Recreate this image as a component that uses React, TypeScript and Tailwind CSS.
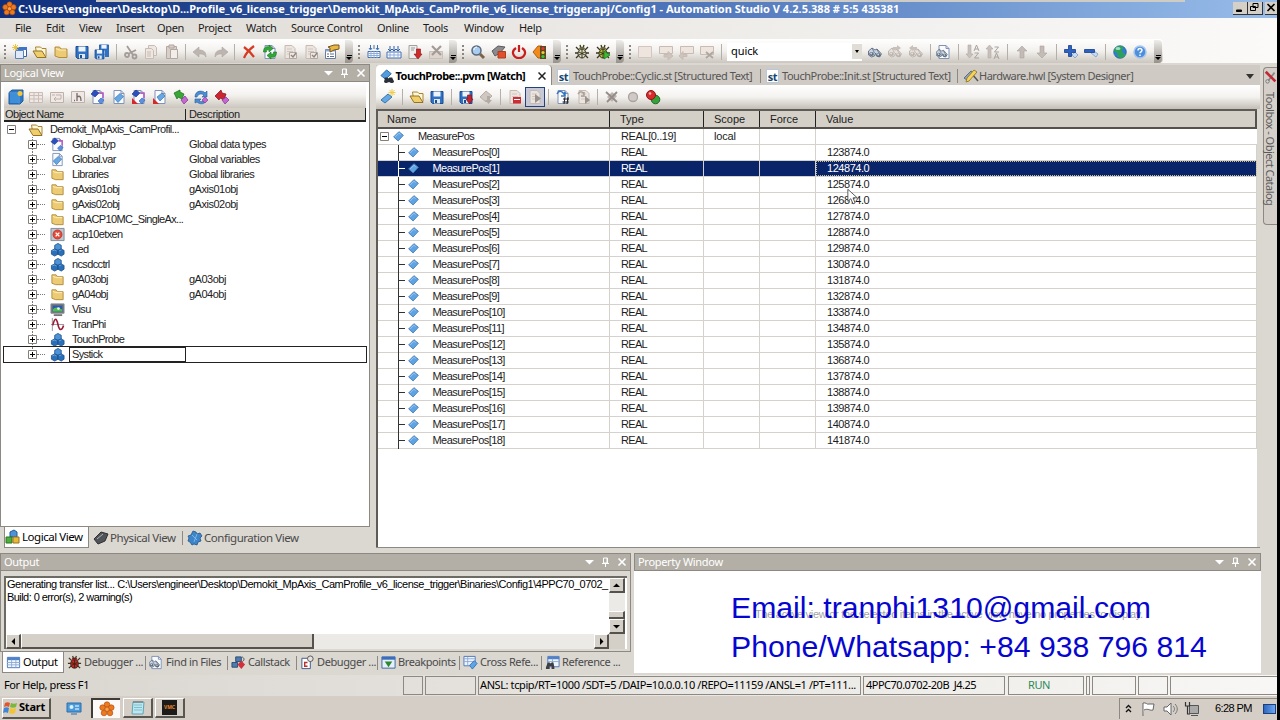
import React from 'react';
import clsx from 'clsx';

const page = (
  <>
    <path d="M3 1.5h7l3 3v10H3z" fill="#fbfbff" stroke="#7f93b5" />
    <path d="M10 1.5v3h3" fill="none" stroke="#7f93b5" />
  </>
);

const greyPage = (
  <>
    <path d="M3 1.5h7l3 3v10H3z" fill="#ece5df" stroke="#c6bab3" />
    <path d="M5 5h5M5 7.500h6M5 10h4" stroke="#cfc5bf" />
  </>
);

const tag = (
  <>
    <path d="M2 8.500 8.500 2 14 6.500 7.500 13.500z" fill="#5fa3e2" stroke="#3f79b4" />
    <path d="M4 8.500 8.500 4l2 1.500" fill="none" stroke="#a9d2f6" />
  </>
);

const floppy = (
  <>
    <path d="M2 2.500h12v12H3.500L2 13z" fill="#2f72c4" stroke="#1b4d92" />
    <path d="M4.500 2.500h7v5h-7z" fill="#eef4fb" />
    <path d="M5 10h6v4.500H5z" fill="#dfe8f2" />
    <path d="M6 11h2v3H6z" fill="#1b4d92" />
  </>
);

const binoculars = (dark: string, light: string) => (
  <>
    <path d="M1.500 7 5 4l3 2 2-1 4.500 5-2 3-3-1-1-3-1 3-3 1-3-2z" fill={light} stroke={dark} strokeWidth=".9" />
    <path d="M5 4l2.500 5M9.500 5 12 9" stroke={dark} strokeWidth=".8" />
    <ellipse cx="4.500" cy="10" rx="2.300" ry="2" fill={dark} />
    <ellipse cx="11.500" cy="11" rx="2.300" ry="2" fill={dark} />
    <circle cx="4.200" cy="9.600" r="1" fill={light} />
    <circle cx="11.200" cy="10.600" r="1" fill={light} />
  </>
);

const bug = (body: string, back: string) => (
  <>
    <path d="M2 3l3 3M14 3l-3 3M1 9h4M15 9h-4M2 14l3-3M14 14l-3-3M6 1l1 3M10 1 9 4" stroke="#3a3520" strokeWidth="1.300" />
    <ellipse cx="8" cy="9.500" rx="4" ry="4.500" fill={body} stroke="#2e2a18" />
    <path d="M5 5c0-3 6-3 6 0z" fill={back} />
    <path d="M8 5v9M5 8l6 3M11 8l-6 3" stroke="#2e2a18" strokeWidth=".9" />
  </>
);

const icons: Record<string, React.ReactNode> = {
  flower: (
    <g fill="#ee7a1e" stroke="#a8430c" strokeWidth=".6">
      <circle cx="8" cy="3.600" r="2.800" />
      <circle cx="12.300" cy="6.600" r="2.800" />
      <circle cx="11" cy="12" r="2.800" />
      <circle cx="5" cy="12" r="2.800" />
      <circle cx="3.600" cy="6.600" r="2.800" />
      <circle cx="8" cy="8.300" r="2.200" fill="#f9a24a" />
    </g>
  ),
  newWindow: (
    <>
      <path d="M5 3.500h9.500v9H5z" fill="#fff" stroke="#335fa8" />
      <path d="M5 3h10v3H5z" fill="#3d74c8" />
      <path d="M3.500 6.500h8v8h-8z" fill="#dfe9f8" stroke="#5c80b8" />
      <path d="M3.500 0v7M0 3.500h7M1 1l5 5M6 1 1 6" stroke="#e8c038" strokeWidth=".9" />
    </>
  ),
  openFolder: (
    <>
      <path d="M3.500 3h5l1.500 1.500h4v8h-9z" fill="#fff7d8" stroke="#a88430" />
      <path d="M1 7h9l4 6.500H5z" fill="#f0cf6a" stroke="#93712a" />
    </>
  ),
  folder: (
    <>
      <path d="M2 3h4.500l1.500 2h6v8.500H6L2 12z" fill="#edcb74" stroke="#a98432" strokeWidth=".9" />
      <path d="M3 4.500 6 6h7" fill="none" stroke="#fff0b8" />
    </>
  ),
  save: floppy,
  saveAll: (
    <>
      <g transform="translate(4 -1) scale(.75)">{floppy}</g>
      <g transform="translate(-.5 4) scale(.75)">{floppy}</g>
      <path d="M11 5h4v8h-4z" fill="#2f72c4" />
    </>
  ),
  cut: (
    <g fill="none" stroke="#a49c98" strokeWidth="1.800">
      <path d="M4 2l6 9M13 6 5 10" />
      <circle cx="4" cy="11" r="2" />
      <circle cx="11.500" cy="12.500" r="2" />
    </g>
  ),
  copy: (
    <g fill="#eee6e1" stroke="#c8bbb4">
      <path d="M5.500 1.500h6l2 2v8h-8z" />
      <path d="M2.500 4.500h6l2 2v8h-8z" />
      <path d="M4 8h4M4 10h4M4 12h4" />
    </g>
  ),
  paste: (
    <g fill="#d9cfc9" stroke="#b3a7a1">
      <path d="M2.500 2.500h10v12h-10z" />
      <path d="M5 1h5v3H5z" />
      <path d="M6.500 5.500h7v9h-7z" fill="#f3edea" />
    </g>
  ),
  undo: <path d="M1 8l6-5v3c5 0 7 2 7 7-2-3-4-3-7-3v3z" fill="#bdb5b0" stroke="#aca49f" strokeWidth=".6" />,
  redo: <path d="M15 8 9 3v3C4 6 2 8 2 13c2-3 4-3 7-3v3z" fill="#bdb5b0" stroke="#aca49f" strokeWidth=".6" />,
  cross: <path d="M3 3c4 3 7 6 10 10M13 2C9 5 5 9 3 14" fill="none" stroke="#d63a22" strokeWidth="2.200" />,
  refreshPage: (
    <>
      {page}
      <path d="M1.500 8c0-5 3-6 5.500-5V1l4 3.500L7 8V6C5 5.500 4 6.500 4.500 8zM14.500 8c0 5-3 6-5.500 5v2l-4-3.500L9 8v2c2 .500 3-.500 2.500-2z" fill="#2fa83a" stroke="#17701f" strokeWidth=".6" />
    </>
  ),
  pageCheck: (
    <>
      {greyPage}
      <path d="M7.500 8.500h7v6h-7z" fill="#eee7e2" stroke="#b5a8a2" />
      <path d="M9 11l2 2 3-4" fill="none" stroke="#8f857f" strokeWidth="1.400" />
    </>
  ),
  properties: (
    <>
      <path d="M1.500 5.500h10v9h-10z" fill="#fff" stroke="#6d7c96" />
      <path d="M1.500 5.500h10v2h-10z" fill="#88a8d8" />
      <path d="M3 10h2M6 10h4M3 12.500h2M6 12.500h4" stroke="#5570a8" />
      <path d="M4 3l6-2h5v4l-5 1-4 2V4z" fill="#e8b744" stroke="#76561c" />
    </>
  ),
  build: (
    <>
      <path d="M2 7.500h12v6H2z" fill="#fff" stroke="#3e6fb4" />
      <path d="M2 9.500h12M2 11.500h12M5 7v7M8 7v7M11 7v7" stroke="#8fadd8" />
      <path d="M4.500 1v4M8 1v4M11.500 1v4M3 4l1.500 2L6 4M10 4l1.500 2L13 4" fill="none" stroke="#3f70b6" />
    </>
  ),
  rebuild: (
    <>
      <path d="M1 8h14v6H1z" fill="#fff" stroke="#3e6fb4" />
      <path d="M1 11h14M4 8v6M8 8v6M12 8v6" stroke="#8fadd8" />
      <path d="M4 2v5M8 2v5M12 2v5M2 5l2 2 2-2M6 5l2 2 2-2M10 5l2 2 2-2" fill="none" stroke="#2a5faa" />
    </>
  ),
  transfer: (
    <>
      <path d="M2 1.500h8v13H2z" fill="#eee" stroke="#a5a09c" />
      <path d="M4 4h4M4 6h3" stroke="#999" />
      <path d="M9.500 5h4v5H15l-4 5-4-5h2.500z" fill="#d02a2a" stroke="#8b1212" strokeWidth=".6" />
    </>
  ),
  disabledCross: (
    <>
      <path d="M1.500 7.500h13v7h-13z" fill="#ded5cf" stroke="#cabfb9" />
      <path d="M4 2l9 9M13 2 4 11" stroke="#a49b96" strokeWidth="2.200" />
    </>
  ),
  magnifier: (
    <>
      <path d="M10 10l4 4" stroke="#7b6248" strokeWidth="3" />
      <circle cx="6.500" cy="6.500" r="4.500" fill="#a9cdf0" stroke="#59677c" strokeWidth="1.500" />
      <path d="M4 6c0-2 1-3 3-3" fill="none" stroke="#fff" />
    </>
  ),
  stopTarget: (
    <>
      <path d="M1 7 7 2l7 1-5 6-5 3z" fill="#8b8b8e" stroke="#5b5b5e" />
      <path d="M7 7.500h7.500v6.500H7z" fill="#e0502c" stroke="#b03a1c" />
    </>
  ),
  power: <path d="M5 4C-1 8 3 14 8 14s9-6 3-10M8 1v7" fill="none" stroke="#c81e1e" strokeWidth="2.200" />,
  traffic: (
    <>
      <path d="M1 8 6 2h4v12H6z" fill="#f08a1c" stroke="#b85a08" />
      <path d="M8 2h6v13H8z" fill="#5a4a22" />
      <circle cx="11" cy="4.500" r="1.600" fill="#e33" />
      <circle cx="11" cy="8.500" r="1.600" fill="#ec3" />
      <circle cx="11" cy="12.500" r="1.600" fill="#3c3" />
    </>
  ),
  bug: bug('#d8d6bc', '#6b6a3a'),
  bugRun: (
    <>
      {bug('#b4b83a', '#6b6a3a')}
      <path d="M9 7l6 4-6 4z" fill="#42b838" stroke="#1c7a1c" strokeWidth=".8" />
    </>
  ),
  redBug: bug('#cc2222', '#7c1616'),
  bookmark: <path d="M1.500 2.500h13v11h-13z" fill="#eee5df" stroke="#d3c6bf" />,
  bookmarkNext: (
    <g fill="#eee5df" stroke="#c8bbb4">
      <path d="M1.500 2.500h13v7h-13z" />
      <path d="M6 10.500h4v-3l5 4.500-5 4v-3H6z" fill="#cfc4bd" />
    </g>
  ),
  bookmarkPrev: (
    <g fill="#eee5df" stroke="#c8bbb4">
      <path d="M2.500 2.500h13v7h-13z" />
      <path d="M9 10.500H5v-3L1 12l4 3.500v-3h4z" fill="#cfc4bd" />
    </g>
  ),
  bookmarkClear: (
    <g fill="#eee5df" stroke="#c8bbb4">
      <path d="M1.500 2.500h13v8h-13z" />
      <path d="M7 8l7 6M14 8l-7 6" stroke="#b0a6a0" strokeWidth="1.800" />
    </g>
  ),
  find: binoculars('#5c6c80', '#c9d4e0'),
  findGrey: (
    <>
      {binoculars('#b9b0ab', '#e6dfda')}
      <path d="M6 3h4V1l4 3-4 3V5H6z" fill="#c9c0ba" />
    </>
  ),
  findGreyBack: (
    <>
      {binoculars('#b9b0ab', '#e6dfda')}
      <path d="M9 3H5V1L1 4l4 3V5h4z" fill="#c9c0ba" />
    </>
  ),
  findPage: (
    <>
      {page}
      <g transform="translate(-1 2) scale(.85)">{binoculars('#5c6c80', '#c9d4e0')}</g>
    </>
  ),
  sortAsc: (
    <>
      <path d="M3 1h3v9h2l-3.500 4L1 10h2z" fill="#c8c0bb" stroke="#b2aaa5" strokeWidth=".6" />
      <path d="M9 7l2.500-6L14 7M10 5h3M9.500 9h4l-4 5h4.500" fill="none" stroke="#aaa29e" />
    </>
  ),
  sortDesc: (
    <>
      <path d="M3 14h3V5h2L4.500 1 1 5h2z" fill="#c8c0bb" stroke="#b2aaa5" strokeWidth=".6" />
      <path d="M9.500 3h4l-4 5h4.500M9 15l2.500-6L14 15M10 13h3" fill="none" stroke="#aaa29e" />
    </>
  ),
  up: <path d="M6 14h4V7h3L8 2 3 7h3z" fill="#c3bbb6" stroke="#aba39e" strokeWidth=".6" />,
  down: <path d="M6 2h4v7h3l-5 5-5-5h3z" fill="#c3bbb6" stroke="#aba39e" strokeWidth=".6" />,
  plus: (
    <>
      <path d="M9 11l3-3 3 3-3 3z" fill="#c9daf2" stroke="#8fa9cf" />
      <path d="M5.500 1.500h3v4h4v3h-4v4h-3v-4h-4v-3h4z" fill="#2b62c4" stroke="#173f88" strokeWidth=".8" />
    </>
  ),
  minus: (
    <>
      <path d="M8 9l3-2 4 3-2 3z" fill="#c9daf2" stroke="#8fa9cf" />
      <path d="M1.500 5.500h10v3h-10z" fill="#2b62c4" stroke="#173f88" strokeWidth=".8" />
    </>
  ),
  globe: (
    <>
      <circle cx="8" cy="8" r="6.300" fill="#2f7fd0" stroke="#1d5a8c" strokeWidth=".7" />
      <path d="M2 7c1-5 7-6 9-4 1 2-2 3-1 5s4 1 3 4c-3 3-6 2-8 0 2-2 0-3-3-5z" fill="#2fa05a" />
      <ellipse cx="6" cy="4.500" rx="2.500" ry="1.500" fill="#9fe0c0" />
    </>
  ),
  help: (
    <>
      <circle cx="8" cy="8" r="6" fill="#4d8fdc" stroke="#a9c6ec" strokeWidth="1.500" />
      <path d="M6 6.500C6 4 10 4 10 6.300c0 1.500-2 1.500-2 3M8 10.500v1.500" fill="none" stroke="#fff" strokeWidth="1.500" />
    </>
  ),
  cube: (
    <>
      <path d="M1 3.500 4 1h11v11l-3 3H1z" fill="#2c78c4" stroke="#1e5da2" />
      <path d="M1.500 4H11v10.500" fill="none" stroke="#63a6e4" />
      <path d="M2 5h8v9H2z" fill="#3f8fd8" />
      <circle cx="12" cy="4.500" r="2.500" fill="#f6c53c" />
    </>
  ),
  gridGrey: (
    <g fill="#f0e8e4" stroke="#cabdb7">
      <path d="M1.500 3.500h13v10h-13z" />
      <path d="M1 6.500h14M1 10h14M6 3v10M10.500 3v10" />
    </g>
  ),
  textGrey: (
    <g fill="#f0e8e4" stroke="#beb1ab">
      <path d="M1.500 3.500h13v10h-13z" />
      <path d="M7 6h5v4H5M7 8l-2 2 2 2M3 6h3" fill="none" />
    </g>
  ),
  headerGrey: (
    <>
      <path d="M1.500 2.500h13v11h-13z" fill="#f0e8e4" stroke="#beb1ab" />
      <path d="M4 11.500h1M7 4v8M7 8c3-2 4 0 4 4" fill="none" stroke="#746b68" strokeWidth="1.300" />
    </>
  ),
  typePage: (
    <>
      {page}
      <path d="M1 5l4-4 4 3-4 4z" fill="#2c4fc0" stroke="#182f86" strokeWidth=".6" />
      <path d="M9 4h4v5" fill="none" stroke="#b85ac4" strokeWidth="1.500" />
      <path d="M8 12l3-3 3 2-3 4z" fill="#5d90e0" stroke="#2d5fb0" strokeWidth=".6" />
    </>
  ),
  varPage: (
    <>
      {page}
      <path d="M3.500 9.500 9 4.500l3.500 3-5.500 6z" fill="#66a8e4" stroke="#3c74ae" strokeWidth=".7" />
    </>
  ),
  typePageRed: (
    <>
      {page}
      <path d="M1 5l4-4 4 3-4 4z" fill="#2c4fc0" stroke="#182f86" strokeWidth=".6" />
      <path d="M9 4h4v5" fill="none" stroke="#b85ac4" strokeWidth="1.500" />
      <path d="M1 9l6 6H1z" fill="#d62828" />
      <path d="M8 12l3-3 3 2-3 4z" fill="#5d90e0" stroke="#2d5fb0" strokeWidth=".6" />
    </>
  ),
  varPageRed: (
    <>
      {page}
      <path d="M5 8l5-4 3 3-5 5z" fill="#66a8e4" stroke="#3c74ae" strokeWidth=".7" />
      <path d="M1 9l6 6H1z" fill="#d62828" />
    </>
  ),
  greenArrow: (
    <>
      <path d="M1 4l6-3v2l4 2-2 5-4-2-1 2z" fill="#39a636" stroke="#1a6a1a" strokeWidth=".7" />
      <path d="M8 11l4-4 3 4-4 4z" fill="#c268cf" stroke="#7e3190" strokeWidth=".7" />
    </>
  ),
  sync: (
    <>
      <path d="M2 8c0-7 8-7 10-4l2-2v6H9l2-2C8 4 5 5 4 8zM2 10h6l-2 2c2 1 4 1 5-1l2 1c-2 4-7 3-9 1l-2 1z" fill="#4a8ed8" stroke="#245a9a" strokeWidth=".6" />
      <path d="M9 11l3-3 3 3-3 3z" fill="#c268cf" stroke="#7e3190" strokeWidth=".6" />
    </>
  ),
  redArrow: (
    <>
      <path d="M1 7l6-6 1 3 4 1-2 6-4-2-1 2z" fill="#cc2430" stroke="#7c0e18" strokeWidth=".7" />
      <path d="M8 11l4-3 3 3-4 4z" fill="#c268cf" stroke="#7e3190" strokeWidth=".7" />
    </>
  ),
  tag,
  tagWand: (
    <>
      <path d="M1 11 8 5l4 3-7 6z" fill="#66a8e4" stroke="#3c74ae" />
      <path d="M12 0v7M8.500 3.500h7M9.500 1l5 5M14.500 1l-5 5" stroke="#f0cb48" />
    </>
  ),
  tagWatch: (
    <>
      <path d="M1 7l6-6 5 4-6 6z" fill="#4f9ce0" stroke="#2d659e" />
      <path d="M5 9h3l1 1 1-1h3l2 5H5z" fill="#2b3038" />
      <circle cx="6.500" cy="13" r="2" fill="#2b3038" />
      <circle cx="12.500" cy="13" r="2" fill="#2b3038" />
    </>
  ),
  saveDown: (
    <>
      {floppy}
      <path d="M9.500 6h4v4H15l-3.500 5L8 10h1.500z" fill="#c3232c" stroke="#821018" strokeWidth=".6" />
    </>
  ),
  greyTag: (
    <>
      <path d="M2 8l6-6 6 5-6 6z" fill="#cfc7c2" stroke="#b5ada8" />
      <path d="M9 7h3v4h2l-3.500 4L7 11h2z" fill="#b2aaa5" />
    </>
  ),
  stopPage: (
    <>
      {greyPage}
      <path d="M6 8h8v6.500H6z" fill="#cf2d36" />
      <path d="M7 10.500h6" stroke="#fff" />
    </>
  ),
  playPage: (
    <>
      {greyPage}
      <path d="M8 5l6 4.500L8 14z" fill="#98908c" />
    </>
  ),
  hashPage: (
    <>
      {page}
      <path d="M2 5c2-4 5-3 7 0l1-2v4H6" fill="none" stroke="#3474c0" strokeWidth="1.500" />
      <path d="M10 8l-1 7M13 8l-1 7M8 10h6M7.500 13h6" stroke="#111" strokeWidth=".9" />
    </>
  ),
  refreshGrey: (
    <>
      {greyPage}
      <path d="M2 5c2-3 4-3 6 0v-2v4H5" fill="none" stroke="#aaa09a" strokeWidth="1.500" />
      <path d="M9 7l5 4-5 4z" fill="#98908c" />
    </>
  ),
  crossGrey: (
    <>
      <path d="M3 8l5-5 5 4-5 6z" fill="#bdb4af" />
      <path d="M2 3l11 10M13 3 3 13" stroke="#958c88" strokeWidth="1.800" />
    </>
  ),
  circleGrey: <circle cx="8" cy="8" r="4.500" fill="#d0c9c5" stroke="#aaa29e" strokeWidth="1.300" />,
  balls: (
    <>
      <circle cx="10.500" cy="10.500" r="4.300" fill="#36a23c" stroke="#1b6a22" />
      <circle cx="6" cy="6" r="4.500" fill="#d62c2c" stroke="#8c1616" />
      <circle cx="5" cy="4.500" r="1.300" fill="#f8b0b0" />
    </>
  ),
  designer: (
    <>
      <path d="M1 10 8 3l3 2-7 7z" fill="#8fa6be" stroke="#5b6e84" />
      <path d="M9 6l6 7" stroke="#555" strokeWidth="1.500" />
      <path d="M3 14l1-4 7-8 3 2-8 9z" fill="#f5d25a" stroke="#8d6f1c" strokeWidth=".8" />
    </>
  ),
  errorBox: (
    <>
      <path d="M1 1.500h14v13H1z" fill="#bfc7cf" stroke="#7f8a94" />
      <circle cx="8" cy="8" r="4.800" fill="#e2493a" stroke="#c0392c" />
      <path d="M6 6l4 4M10 6l-4 4" stroke="#fff" strokeWidth="1.500" />
    </>
  ),
  cubes: (
    <g fill="#2a70b8" stroke="#154a86" strokeWidth=".8">
      <path d="M5 3.500 8.500 1.500 12 3.500v4L8.500 9 5 7.500z" fill="#4b92d6" />
      <path d="M1.500 9 5 7.500 8.500 9v4L5 15l-3.500-2z" />
      <path d="M8.500 9 12 7.500 15 9v4l-3 2-3.500-2z" />
      <path d="M2.500 9.500 5 8.500l2 1M9.500 9.500 12 8.500" stroke="#7db7ee" fill="none" />
    </g>
  ),
  colorCubes: (
    <>
      <path d="M5 3l4-2 3 2v5H5z" fill="#4b92d6" stroke="#245a96" />
      <path d="M1 8h6v6H1z" fill="#4fae3e" stroke="#2a7420" />
      <path d="M8 8h6v6H8z" fill="#e8b836" stroke="#9a7418" />
    </>
  ),
  visu: (
    <>
      <path d="M1 2h14v10H1z" fill="#6a727c" stroke="#8a8f95" />
      <path d="M3 4h10v6H3z" fill="#2a56b8" />
      <path d="M3 10V8c2-3 5-3 10 0v2z" fill="#4ec04a" />
      <circle cx="9" cy="7" r="1.500" fill="#e8f0e8" />
      <path d="M4 14h9" stroke="#777" strokeWidth="2" />
    </>
  ),
  wave: (
    <>
      <path d="M2.500 1v14M1 8h14" stroke="#888" strokeWidth=".9" />
      <path d="M3 9C5 0 7 1 8.500 8s4 7 6 1" fill="none" stroke="#9c1838" strokeWidth="1.700" />
    </>
  ),
  plc: (
    <>
      <path d="M1 9l7-7 7 2-3 7-7 3z" fill="#505358" stroke="#2e3034" />
      <path d="M4 9l6-5" stroke="#b0b4ba" />
    </>
  ),
  gear: (
    <>
      <path d="M6 1l3 1 1 2 3-1 2 3-2 2 1 3-3 1-1 3-3-1-2 1-2-3-2-1 1-3-1-2 3-1z" fill="#3d84c8" stroke="#1f558e" strokeWidth=".8" />
      <path d="M5 5l5 5M10 4 7 12" stroke="#8cc0f0" strokeWidth=".8" />
    </>
  ),
  table: (
    <>
      <path d="M1.500 2.500h13v11h-13z" fill="#f4f8ff" stroke="#4f78b4" />
      <path d="M1.500 2.500h13v3h-13z" fill="#4f82cc" />
      <path d="M1 8h14M1 10.500h14M6 5v8M10.500 5v8" stroke="#8fabd4" />
    </>
  ),
  callstack: (
    <>
      <path d="M1 8h6v5H1zM5 2h6v5H5z" fill="#4d7cae" stroke="#2c4b70" />
      <path d="M12 2c3 2 2 4 0 5" fill="none" stroke="#445" />
      <path d="M7 10l4-4 4 4-4 5z" fill="#d2303a" />
    </>
  ),
  debugWatch: (
    <>
      <path d="M2 3.500h9v11H2z" fill="#fff" stroke="#3c568a" />
      <circle cx="11" cy="4" r="3" fill="#e7dfe0" stroke="#555" />
      <path d="M8 8H5v4h3" fill="none" stroke="#b83030" strokeWidth="1.500" />
    </>
  ),
  breakpoints: (
    <>
      <path d="M1 2h14v12H1z" fill="#e7effb" stroke="#3a64a4" />
      <path d="M1 2h14v3H1z" fill="#3a6cc0" />
      <path d="M4 7h8l-4 6z" fill="#2c8a2c" />
    </>
  ),
  crossRef: (
    <>
      <path d="M1 1.500h12v10H1z" fill="#eef4ff" stroke="#4f78b4" />
      <path d="M1 4h12M1 7h12M5 2v9" stroke="#8fabd4" />
      <path d="M7 11l5-5 3 3-5 6z" fill="#5fa4e6" stroke="#3674b4" />
    </>
  ),
  refList: (
    <>
      <path d="M3 1.500h12v11H3z" fill="#eef4ff" stroke="#4f78b4" />
      <path d="M3 2h12v2.500H3z" fill="#4f82cc" />
      <path d="M3 7h12M8 4v8" stroke="#8fabd4" />
      <path d="M1 13l2-5h2l1 1 1-1h2l1 5v2H7v-3H5v3H1z" fill="#3c4046" />
    </>
  ),
  windows: (
    <>
      <path d="M2 3c2-1 3-1 5 0L6 7C4 6 3 6 1 7z" fill="#e2552c" />
      <path d="M8 3c2 1 4 1 6 0l-1 4c-2 1-4 1-6 0z" fill="#7bb83a" />
      <path d="M1 8c2-1 3-1 5 0l-1 5c-2-1-3-1-5 0z" fill="#3f86d8" />
      <path d="M7 8c2 1 4 1 6 0l-1 5c-2 1-4 1-6 0z" fill="#f4c430" />
    </>
  ),
  explorer: (
    <>
      <path d="M1 3h14v9H1z" fill="#4a9ada" stroke="#2c6fae" />
      <circle cx="5.500" cy="7" r="2" fill="#d8f0ff" />
      <path d="M9 6h4M9 9h4" stroke="#fff" />
      <path d="M5 14h6" stroke="#7f9db8" strokeWidth="2" />
    </>
  ),
  notepad: (
    <>
      <path d="M3 2h11l-1 12H2z" fill="#bfe6ee" stroke="#5fa4b6" />
      <path d="M4 5h8M4 7.500h8M4 10h8" stroke="#7cc0cf" />
      <path d="M4 1v2M6 1v2M8 1v2M10 1v2M12 1v2" stroke="#666" />
    </>
  ),
  flag: <path d="M3 15V2c3-1 4 2 6 1l5 0-1 6c-3 1-5-2-9 0" fill="#fff" stroke="#666" />,
  speaker: (
    <>
      <path d="M2 6h3l4-4v12l-4-4H2z" fill="#fff" stroke="#666" />
      <path d="M11 5c2 2 2 4 0 6M13 3c3 3 3 7 0 10" fill="none" stroke="#777" />
    </>
  ),
  network: (
    <>
      <path d="M5.500 4.500h9v8h-9z" fill="#aaa" stroke="#555" />
      <path d="M7 14.500h7" stroke="#555" />
      <path d="M1.500 1v4h4V1M3.500 5v8H6" fill="none" stroke="#333" strokeWidth="1.200" />
    </>
  ),
  tools: (
    <>
      <path d="M12 3 5 12" stroke="#888" strokeWidth="2" />
      <path d="M2 2l11 11" stroke="#c22835" strokeWidth="3" />
      <circle cx="4" cy="13" r="2" fill="none" stroke="#777" />
    </>
  ),
};

function Icon({ name, size = 16 }: { name: string; size?: number }) {
  return (
    <svg width={size} height={size} viewBox="0 0 16 16" className="shrink-0">
      {icons[name]}
    </svg>
  );
}

function Separator() {
  return (
    <div className="flex w-[7.800px] shrink-0 justify-center">
      <div className="h-4 w-px bg-[#b4b0a9]" />
    </div>
  );
}

function Grip() {
  return (
    <div className="flex w-[9.500px] shrink-0 flex-col items-center gap-[2px]">
      {[0, 1, 2, 3].map((i) => (
        <div key={i} className="h-[2px] w-[2px] bg-[#8b8780]" />
      ))}
    </div>
  );
}

function Overflow() {
  return (
    <div className="mr-px ml-[3.300px] flex h-[23px] w-2 shrink-0 flex-col items-center justify-end rounded-r bg-gradient-to-b from-[#efedea] to-[#96928b] pb-[3px]">
      <div className="mb-px h-px w-[5px] bg-black" />
      <div className="h-0 w-0 border-x-[3px] border-t-[3px] border-x-transparent border-t-black" />
    </div>
  );
}

// "|" separator, ":" grip, ">" overflow button, anything else an icon
function ToolItems({ items }: { items: string[] }) {
  return (
    <>
      {items.map((item, i) => {
        if (item === '|') return <Separator key={i} />;
        if (item === ':') return <Grip key={i} />;
        if (item === '>') return <Overflow key={i} />;
        return (
          <div key={i} className="flex w-[20.600px] shrink-0 justify-center">
            <Icon name={item} />
          </div>
        );
      })}
    </>
  );
}

const menu = [
  ['File', 'w-[31px]'],
  ['Edit', 'w-[33px]'],
  ['View', 'w-[37px]'],
  ['Insert', 'w-[41px]'],
  ['Open', 'w-[41px]'],
  ['Project', 'w-[48px]'],
  ['Watch', 'w-[45px]'],
  ['Source Control', 'w-[86px]'],
  ['Online', 'w-[46px]'],
  ['Tools', 'w-[41px]'],
  ['Window', 'w-[55px]'],
  ['Help', 'w-[40px]'],
];

const toolbarLeft = [
  'newWindow', 'openFolder', 'folder', 'save', 'saveAll', '|', 'cut', 'copy', 'paste', '|', 'undo', 'redo', '|',
  'cross', 'refreshPage', 'pageCheck', 'pageCheck', 'properties', '>', ':', 'build', 'rebuild', 'transfer',
  'disabledCross', '>', ':', 'magnifier', 'stopTarget', 'power', 'traffic', '>', ':', 'bug', 'bugRun', '>', ':',
  'bookmark', 'bookmarkNext', 'bookmarkPrev', 'bookmarkClear', '|',
];

const toolbarRight = [
  'find', 'findGrey', 'findGreyBack', '|', 'findPage', '|', 'sortAsc', 'sortDesc', '|', 'up', 'down', '|',
  'plus', 'minus', '|', 'globe', 'help', '>',
];

const tree = [
  { icon: 'typePage', name: 'Global.typ', desc: 'Global data types' },
  { icon: 'varPage', name: 'Global.var', desc: 'Global variables' },
  { icon: 'folder', name: 'Libraries', desc: 'Global libraries' },
  { icon: 'folder', name: 'gAxis01obj', desc: 'gAxis01obj' },
  { icon: 'folder', name: 'gAxis02obj', desc: 'gAxis02obj' },
  { icon: 'folder', name: 'LibACP10MC_SingleAx...', desc: '' },
  { icon: 'errorBox', name: 'acp10etxen', desc: '' },
  { icon: 'cubes', name: 'Led', desc: '' },
  { icon: 'cubes', name: 'ncsdcctrl', desc: '' },
  { icon: 'folder', name: 'gA03obj', desc: 'gA03obj' },
  { icon: 'folder', name: 'gA04obj', desc: 'gA04obj' },
  { icon: 'visu', name: 'Visu', desc: '' },
  { icon: 'wave', name: 'TranPhi', desc: '' },
  { icon: 'cubes', name: 'TouchProbe', desc: '' },
  { icon: 'cubes', name: 'Systick', desc: '' },
];

const outputTabs = [
  { icon: 'redBug', label: 'Debugger ...', width: 'w-[82px]' },
  { icon: 'findPage', label: 'Find in Files', width: 'w-[82px]' },
  { icon: 'callstack', label: 'Callstack', width: 'w-[69px]' },
  { icon: 'debugWatch', label: 'Debugger ...', width: 'w-[81px]' },
  { icon: 'breakpoints', label: 'Breakpoints', width: 'w-[82px]' },
  { icon: 'crossRef', label: 'Cross Refe...', width: 'w-[82px]' },
  { icon: 'refList', label: 'Reference ...', width: 'w-[84px]' },
];

function PanelHeader({ title }: { title: string }) {
  return (
    <div className="flex h-[18px] shrink-0 items-center border border-[#8d8982] bg-[#b3afa6] pl-[3px] text-white">
      <span className="flex-1 text-[11px] tracking-[-0.300px]">{title}</span>
      <svg width="46" height="12" viewBox="0 0 46 12" className="mr-[3px]" fill="none" stroke="#fff">
        <path d="M4 4h9l-4.500 4.500z" fill="#fff" stroke="none" />
        <path d="M22.500 2h4v5h-4zM21 7.500h7M24.500 8v3M26 2v5" />
        <path d="m37.500 2.500 7 7M44.500 2.500l-7 7" strokeWidth="1.600" />
      </svg>
    </div>
  );
}

function Expander({ open }: { open?: boolean }) {
  return (
    <svg width="9" height="9" viewBox="0 0 9 9" className="shrink-0">
      <path d="M.5.5h8v8h-8z" fill="#fff" stroke="#848078" />
      <path d={open ? 'M2 4.500h5' : 'M2 4.500h5M4.500 2v5'} stroke="#000" />
    </svg>
  );
}

function LogicalView() {
  return (
    <div className="flex w-[370px] shrink-0 flex-col pt-px">
      <PanelHeader title="Logical View" />
      <div className="flex h-[445px] flex-col border-x border-b border-[#8d8982] bg-white px-[3px] pb-px">
        <div className="flex h-[26px] shrink-0 items-center bg-gradient-to-b from-white via-[#f4f2ef] to-[#cbc6be] pl-[1.500px] pt-1">
          <ToolItems
            items={['cube', 'gridGrey', 'textGrey', 'headerGrey', 'typePage', 'varPage', 'typePageRed', 'varPageRed', 'greenArrow', 'sync', 'redArrow']}
          />
        </div>
        <div className="flex h-[14px] shrink-0 items-center border-b-2 border-r border-[#222] bg-[#d4d0c8] font-['Liberation_Sans',sans-serif] text-[11px] text-[#222]">
          <div className="w-[182px] border-r border-[#222] pl-px leading-[11px] tracking-[-0.500px]">Object Name</div>
          <div className="pl-[3px] leading-[11px] tracking-[-0.400px]">Description</div>
        </div>
        <div className="flex-1 font-['Liberation_Sans',sans-serif] text-[11px] leading-[15px] tracking-[-0.640px] text-[#222]">
          <div className="flex h-[15px] items-center pl-[3px]">
            <Expander open />
            <div className="ml-3">
              <Icon name="openFolder" />
            </div>
            <span className="ml-[6px]">Demokit_MpAxis_CamProfil...</span>
          </div>
          {tree.map((node, i) => {
            const selected = i === tree.length - 1;
            return (
              <div key={node.name} className={clsx('flex h-[15px] items-center', selected && 'outline outline-[#222]')}>
                <div className="flex h-full w-[28px] shrink-0 justify-end">
                  <div className={clsx('mr-[-1px] w-px border-l border-dotted border-[#777]', selected ? 'h-1' : 'h-full')} />
                </div>
                <div className="relative ml-[-4px]">
                  <Expander />
                </div>
                <div className="w-2 border-t border-dotted border-[#777]" />
                <div className="ml-1 flex w-4 justify-center">
                  <Icon name={node.icon} size={15} />
                </div>
                <div
                  className={clsx(
                    'ml-1 flex h-[15px] w-[117px] shrink-0 items-center whitespace-nowrap',
                    selected ? 'border border-[#222] pl-[2px]' : 'pl-[3px]',
                  )}
                >
                  {node.name}
                </div>
                <div className="pl-[3px] tracking-[-0.500px]">{node.desc}</div>
              </div>
            );
          })}
        </div>
      </div>
      <div className="flex h-[21px] items-center pl-1 text-[11.500px] tracking-[-0.450px] whitespace-nowrap text-[#4a4a4a]">
        <div className="-mt-px flex h-[21px] w-[85px] shrink-0 items-center gap-px border-x border-b border-[#8d8982] bg-white text-black">
          <Icon name="colorCubes" />
          Logical View
        </div>
        <div className="flex w-[93px] items-center gap-px pl-1">
          <Icon name="plc" />
          Physical View
        </div>
        <div className="h-[14px] w-px bg-[#8d8982]" />
        <div className="flex items-center gap-px pl-[4px]">
          <Icon name="gear" />
          Configuration View
        </div>
      </div>
    </div>
  );
}

const columns = ['w-[232px]', 'w-[94px]', 'w-[56px]', 'w-[56px]', 'flex-1'];

function WatchTable() {
  const rows = Array.from({ length: 19 }, (_, i) => ({ name: `MeasurePos[${i}]`, value: `${123874 + i * 1000}.0` }));
  return (
    <div className="mr-[3px] flex flex-1 flex-col border-l-2 border-t-2 border-[#5f5b56] bg-white font-['Liberation_Sans',sans-serif] text-[11px] text-[#1c1c1c]">
      <div className="flex h-[18px] shrink-0 items-stretch border-b-2 border-r-2 border-[#55514c] bg-[#d4d0c8]">
        {['Name', 'Type', 'Scope', 'Force', 'Value'].map((title, i) => (
          <div
            key={title}
            className={clsx(columns[i], 'flex items-center', i === 0 ? 'pl-[9px]' : 'pl-[10px]', i < 4 && 'border-r border-[#222]')}
          >
            {title}
          </div>
        ))}
      </div>
      <div className="flex h-4 items-stretch border-b border-[#d5d2cc]">
        <div className="flex w-[232px] items-center border-r border-[#d5d2cc] pl-[2px]">
          <Expander open />
          <div className="ml-[3px]">
            <Icon name="tag" size={13} />
          </div>
          <span className="ml-[13px] tracking-[-0.550px]">MeasurePos</span>
        </div>
        <div className="flex w-[94px] items-center border-r border-[#d5d2cc] pl-[11px] tracking-[-0.400px]">REAL[0..19]</div>
        <div className="flex w-[56px] items-center border-r border-[#d5d2cc] pl-[10px] tracking-[-0.200px]">local</div>
        <div className="w-[56px] border-r border-[#d5d2cc]" />
        <div className="flex-1" />
      </div>
      {rows.map((row, i) => {
        const selected = i === 1;
        const cell = 'flex items-center border-r border-[#d5d2cc]';
        return (
          <div
            key={row.name}
            className={clsx('flex h-4 items-stretch border-b border-[#d5d2cc]', selected && 'bg-[#0a246a] text-white')}
          >
            <div className="flex w-[232px] items-center border-r border-[#d5d2cc] pl-5">
              <div className={clsx('h-4 w-px', selected ? 'bg-white' : 'bg-[#333]')} />
              <div className={clsx('h-px w-[6px]', selected ? 'bg-white' : 'bg-[#333]')} />
              <div className="ml-[2px]">
                <Icon name="tag" size={13} />
              </div>
              <span className="ml-[12.500px] tracking-[-0.560px]">{row.name}</span>
            </div>
            <div className={clsx(cell, 'w-[94px] pl-[11px] tracking-[-0.700px]')}>REAL</div>
            <div className={clsx(cell, 'w-[56px]')} />
            <div className={clsx(cell, 'w-[56px]')} />
            <div
              className={clsx(
                'flex flex-1 items-center border-r border-[#d5d2cc] pl-[11px] tracking-[-0.450px]',
                selected && 'outline-1 -outline-offset-1 outline-dotted outline-[#c9bd8a]',
              )}
            >
              {row.value}
            </div>
          </div>
        );
      })}
    </div>
  );
}

function StPage() {
  return (
    <div className="flex h-[14px] w-[13px] shrink-0 items-center justify-center border border-[#b7c8dc] bg-white text-[11px] font-bold leading-none text-[#16456e]">
      st
    </div>
  );
}

function Editor() {
  return (
    <div className="ml-[6px] flex w-[884px] shrink-0 flex-col border-b border-[#8d8982] pt-[2px]">
      <div className="flex h-[20px] shrink-0 items-center bg-[#cfcac3] pt-[2px] text-[11px] tracking-[-0.460px] whitespace-nowrap text-[#555]">
        <div className="-mt-[2px] flex h-[20px] w-[176px] shrink-0 items-center rounded-t border-r border-[#8d8982] bg-white pt-[2px] pl-1 text-black">
          <Icon name="tagWatch" size={15} />
          <span className="ml-[.5px] w-[142px] text-[11px] font-bold tracking-[-0.520px]">TouchProbe::.pvm [Watch]</span>
          <svg width="8" height="8" viewBox="0 0 8 8">
            <path d="m.5.5 7 7M7.500.5l-7 7" stroke="#222" strokeWidth="1.500" />
          </svg>
        </div>
        <div className="flex w-[208px] shrink-0 items-center gap-[3px] pl-[5px]">
          <StPage />
          TouchProbe::Cyclic.st [Structured Text]
        </div>
        <div className="h-[14px] w-px bg-[#8d8982]" />
        <div className="flex w-[196px] shrink-0 items-center gap-[3px] pl-[5px]">
          <StPage />
          TouchProbe::Init.st [Structured Text]
        </div>
        <div className="h-[14px] w-px bg-[#8d8982]" />
        <div className="flex flex-1 items-center pl-[5px]">
          <Icon name="designer" />
          <span className="tracking-[-0.490px]">Hardware.hwl [System Designer]</span>
        </div>
        <div className="mr-[6px] h-0 w-0 border-x-4 border-t-[5px] border-x-transparent border-t-[#333]" />
      </div>
      <div className="flex h-[24px] shrink-0 items-center bg-gradient-to-b from-white via-[#f4f2ef] to-[#c3beb6] pl-[2px]">
        <ToolItems items={['tagWand', '|', 'openFolder', 'save', '|', 'saveDown', 'greyTag', '|', 'stopPage']} />
        <div className="flex h-5 w-5 items-center justify-center border border-[#26407c] bg-[#c5c9d8]">
          <Icon name="playPage" />
        </div>
        <ToolItems items={['|', 'hashPage', 'refreshGrey', '|', 'crossGrey', 'circleGrey', 'balls']} />
      </div>
      <WatchTable />
    </div>
  );
}

function ScrollButton({ d, className }: { d: string; className?: string }) {
  return (
    <div
      className={clsx(
        'flex items-center justify-center border-b-2 border-l border-r-2 border-t border-b-[#55514c] border-l-white border-r-[#55514c] border-t-white bg-[#d4d0c8]',
        className,
      )}
    >
      <svg width="7" height="7" viewBox="0 0 7 7">
        <path d={d} fill="#000" />
      </svg>
    </div>
  );
}

function OutputPanel() {
  return (
    <div className="flex w-[631px] shrink-0 flex-col">
      <PanelHeader title="Output" />
      <div className="h-[81px] border-x border-b border-[#8d8982] px-[3px] pt-[5px]">
        <div className="flex h-[73px] border-l-2 border-t-2 border-[#6d6963] bg-white">
          <div className="flex w-[603px] shrink-0 flex-col">
            <div className="flex-1 overflow-hidden whitespace-nowrap pl-px font-['Liberation_Sans',sans-serif] text-[11px] leading-[12.500px] text-black">
              <p className="tracking-[-0.475px]">Generating transfer list... C:\Users\engineer\Desktop\Demokit_MpAxis_CamProfile_v6_license_trigger\Binaries\Config1\4PPC70_0702_</p>
              <p className="tracking-[-0.560px]">Build: 0 error(s), 2 warning(s)</p>
            </div>
            <div className="flex h-[15px] shrink-0 bg-[#eceae6]">
              <ScrollButton d="M5 0v7L1.500 3.500z" className="w-[15px]" />
              <div className="w-[293px] border-b-2 border-l border-r-2 border-b-[#55514c] border-l-white border-r-[#55514c] bg-[#d4d0c8]" />
              <div className="flex-1" />
              <ScrollButton d="M2 0v7l3.500-3.500z" className="w-[15px]" />
            </div>
          </div>
          <div className="flex w-[16px] flex-col bg-[#eceae6]">
            <ScrollButton d="M0 5h7L3.500 1.500z" className="h-[15px]" />
            <div className="flex-1" />
            <div className="h-[8px] border-b-2 border-r-2 border-t border-b-[#55514c] border-r-[#55514c] border-t-white bg-[#d4d0c8]" />
            <ScrollButton d="M0 2h7L3.500 5.500z" className="h-[15px]" />
            <div className="h-[15px] bg-[#d4d0c8]" />
          </div>
        </div>
      </div>
      <div className="flex h-[21px] items-center pl-[2px] text-[11px] tracking-[-0.400px] text-[#4a4a4a]">
        <div className="flex h-full w-[62px] shrink-0 items-center gap-[2px] border-x border-b border-[#8d8982] bg-white pl-[3px] text-black">
          <Icon name="table" size={15} />
          Output
        </div>
        {outputTabs.map((tab, i) => (
          <div
            key={i}
            className={clsx(
              'flex h-[14px] shrink-0 items-center gap-[2px] whitespace-nowrap pl-[3px]',
              tab.width,
              i < outputTabs.length - 1 && 'border-r border-[#8d8982]',
            )}
          >
            <Icon name={tab.icon} size={15} />
            {tab.label}
          </div>
        ))}
      </div>
    </div>
  );
}

function PropertyWindow() {
  return (
    <div className="ml-[3px] flex w-[627px] flex-col">
      <PanelHeader title="Property Window" />
      <div className="relative flex-1 bg-white">
        <p className="pt-[36px] pl-[121px] font-['Liberation_Sans',sans-serif] text-[11px] leading-[14px] tracking-[-0.290px] whitespace-nowrap text-[#a3a3a3]">
          The active view or the selected items in the active view have no properties to display.
        </p>
        <div className="absolute top-[17px] left-[97px] font-['Liberation_Sans',sans-serif] text-[30.200px] leading-[39px] whitespace-nowrap text-[#0606d0]">
          <p>Email: tranphi1310@gmail.com</p>
          <p>Phone/Whatsapp: +84 938 796 814</p>
        </div>
      </div>
    </div>
  );
}

function StatusBar() {
  const cell = 'flex h-[19px] shrink-0 items-center border border-[#8d8982] whitespace-nowrap';
  return (
    <div className="mt-[2px] flex h-[21px] shrink-0 items-center bg-gradient-to-r from-[#d9d5cf] to-[#f8f7f5] text-[11px] tracking-[-0.400px] text-black">
      <div className="w-[403px] shrink-0 pl-1">For Help, press F1</div>
      <div className={clsx(cell, 'w-5')} />
      <div className={clsx(cell, 'ml-[2px] w-[51px]')} />
      <div className={clsx(cell, 'ml-[2px] w-[383px] pl-px')}>
        ANSL: tcpip/RT=1000 /SDT=5 /DAIP=10.0.0.10 /REPO=11159 /ANSL=1 /PT=111...
      </div>
      <div className={clsx(cell, 'ml-[2px] w-[142px] pl-[2px] tracking-[-0.500px] whitespace-pre')}>{'4PPC70.0702-20B  J4.25'}</div>
      <div className={clsx(cell, 'ml-[3px] w-[76px] pl-[19px] text-[#2c8a57]')}>RUN</div>
      <div className={clsx(cell, 'ml-[2px] w-1')} />
      <div className={clsx(cell, 'ml-[2px] w-[44px]')} />
      <div className={clsx(cell, 'ml-[2px] w-[30px]')} />
      <div className={clsx(cell, 'ml-[2px] w-[107px] border-r-0')} />
    </div>
  );
}

function TaskBar() {
  const raised = 'border-b-2 border-l border-r-2 border-t border-b-[#5a5650] border-l-white border-r-[#5a5650] border-t-white';
  return (
    <div className="flex flex-1 items-center bg-[#d4cec6] pl-[2px] text-[11px]">
      <div className={clsx('flex h-[21px] w-[49px] items-center font-bold tracking-[-0.200px]', raised)}>
        <Icon name="windows" />
        Start
      </div>
      <div className="ml-[15px]">
        <Icon name="explorer" />
      </div>
      <div className="ml-[9px] flex h-[20px] w-[29px] items-center justify-center border-l-2 border-t-2 border-[#3f3c38] bg-[#fbfaf9]">
        <Icon name="flower" />
      </div>
      <div className={clsx('ml-[3px] flex h-[20px] w-[30px] items-center justify-center', raised)}>
        <Icon name="notepad" />
      </div>
      <div className={clsx('ml-[2px] flex h-[20px] w-[30px] items-center justify-center', raised)}>
        <div className="flex h-[15px] w-[15px] items-center justify-center bg-[#1d1b1a] text-[5px] font-bold text-[#e5842c]">VMC</div>
      </div>
      <div className="ml-auto flex h-[21px] w-[158px] items-center border-l border-t border-[#8d8982] pl-[5px]">
        <svg width="7" height="9" viewBox="0 0 7 9" fill="none" stroke="#111" strokeWidth="1.300">
          <path d="M1 4l2.500-2.500L6 4M1 8l2.500-2.500L6 8" />
        </svg>
        <div className="ml-2 flex gap-[6px]">
          <Icon name="flag" />
          <Icon name="speaker" />
          <Icon name="network" />
        </div>
        <span className="ml-[15px] w-[48px] font-['Liberation_Sans',sans-serif] tracking-[-0.600px] whitespace-nowrap">6:28 PM</span>
        <div className="h-[10px] w-[13px] border border-[#1a3f7c] bg-gradient-to-r from-[#2d66c0] to-[#6ea6ec]" />
      </div>
    </div>
  );
}

export default function App() {
  return (
    <div className="flex h-[720px] w-[1280px] overflow-hidden bg-black font-['Noto_Sans',sans-serif]">
      <div className="relative flex w-[1277px] shrink-0 flex-col overflow-hidden bg-[#dbd7d1]">
        {/* Title bar */}
        <div className="flex h-[18px] shrink-0 flex-col bg-gradient-to-r from-[#0f2f7c] via-[#4a70b6] to-[#98bdea]">
          <div className="mr-[92px] ml-24 h-[2px] shrink-0 bg-[#cfccc6]" />
          <div className="flex h-[13px] shrink-0 items-center pl-[2px]">
            <Icon name="flower" size={15} />
            <span className="ml-px flex-1 text-[11px] leading-[13px] font-bold tracking-[0.012px] whitespace-nowrap text-white">
              C:\Users\engineer\Desktop\D...Profile_v6_license_trigger\Demokit_MpAxis_CamProfile_v6_license_trigger.apj/Config1 - Automation Studio V 4.2.5.388 # 5:5 435381
            </span>
            {['M3 8h5v1.500H3z', 'M4.500 1.500h5v4h-5zM2 4.500h5v4H2z', 'M2 2l7 7M9 2 2 9'].map((d, i) => (
              <div
                key={d}
                className={clsx('h-[13px] w-[15px] shrink-0 border-b border-r border-[#333] bg-[#d4d0c8]', i === 2 && 'ml-[2px] mr-[-3px]')}
              >
                <svg width="13" height="12" viewBox="0 0 12 12">
                  <path d={d} fill={i === 2 ? 'none' : i === 0 ? '#000' : '#d4d0c8'} stroke="#000" strokeWidth={i === 2 ? 1.6 : 1} />
                </svg>
              </div>
            ))}
          </div>
        </div>

        {/* Menu */}
        <div className="flex h-[21px] shrink-0 items-center bg-gradient-to-r from-[#dedad5] to-[#fbfaf9] pl-[15px] text-[11px] tracking-[-0.350px] text-[#1a1a1a]">
          {menu.map(([label, width]) => (
            <div key={label} className={clsx('shrink-0 whitespace-nowrap', width)}>
              {label}
            </div>
          ))}
        </div>

        {/* Toolbars */}
        <div className="flex h-[24px] shrink-0 bg-gradient-to-r from-[#dedad5] to-[#fbfaf9]">
          <div className="flex h-[24px] items-center rounded-r bg-gradient-to-b from-white via-[#f3f1ee] to-[#cbc6be] pt-px">
            <ToolItems items={[':', ...toolbarLeft]} />
            <div className="ml-[2px] flex h-[18px] w-[135px] items-center justify-between bg-white pl-1 text-[11px] tracking-[-0.100px]">
              quick
              <div className="flex h-[15px] w-[10px] items-center justify-center bg-[#e0dcd6]">
                <div className="h-0 w-0 border-x-[2.500px] border-t-[3px] border-x-transparent border-t-black" />
              </div>
            </div>
            <div className="w-[2.500px]" />
            <ToolItems items={toolbarRight} />
          </div>
        </div>

        <div className="flex h-[485px] shrink-0">
          <LogicalView />
          <Editor />
          <div className="ml-[3px] mt-[4px] flex flex-1 flex-col items-center">
            <div className="flex h-[158px] w-[14px] flex-col items-center rounded-l border border-r-0 border-[#8d8982] bg-[#d4cfc8] pt-[2px]">
              <Icon name="tools" size={14} />
              <span className="mt-2 text-[11px] leading-[13px] tracking-[-0.520px] whitespace-nowrap text-[#5a5a5a] [writing-mode:vertical-rl]">
                Toolbox - Object Catalog
              </span>
            </div>
          </div>
        </div>

        <div className="mt-[5px] flex h-[120px] shrink-0">
          <OutputPanel />
          <PropertyWindow />
        </div>
        <StatusBar />
        <TaskBar />

        {/* Mouse pointer over the value column */}
        <svg width="12" height="18" viewBox="0 0 14 20" className="absolute top-[188px] left-[847px]">
          <path d="M1 1v14l3.500-3 2.500 6 2.500-1-2.500-6H12z" fill="#fff" stroke="#444" />
        </svg>
      </div>
    </div>
  );
}
